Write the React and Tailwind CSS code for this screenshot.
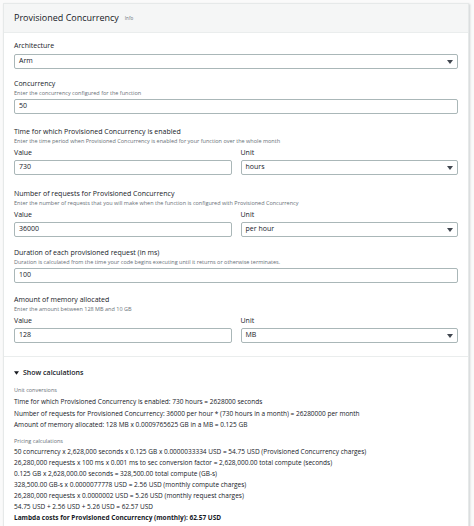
import React from 'react';

const Caret = () => (
  <svg width="6" height="4" viewBox="0 0 6 4" className="shrink-0">
    <path d="M0 0h6L3 4z" fill="#414750" />
  </svg>
);

const Label = ({ children }) => (
  <div className="text-[7px] leading-[10px] font-medium text-[#16191f]">{children}</div>
);

const Desc = ({ children }) => (
  <div className="text-[5.5px] leading-[8px] text-[#687078]">{children}</div>
);

const Input = ({ value }) => (
  <div className="h-[15px] border border-[#aab7b8] rounded-[2px] bg-white px-[4px] flex items-center text-[7px] text-[#16191f]">
    {value}
  </div>
);

const Select = ({ value }) => (
  <div className="h-[15px] border border-[#aab7b8] rounded-[2px] bg-white pl-[4px] pr-[4px] flex items-center justify-between text-[7px] text-[#16191f]">
    <span>{value}</span>
    <Caret />
  </div>
);

const Field = ({ label, desc, children, className = '' }) => (
  <div className={className}>
    <Label>{label}</Label>
    {desc && <Desc>{desc}</Desc>}
    <div className={desc ? 'mt-[2px]' : 'mt-[3px]'}>{children}</div>
  </div>
);

const SplitField = ({ label, desc, value, unit, className = '' }) => (
  <div className={className}>
    <Label>{label}</Label>
    <Desc>{desc}</Desc>
    <div className="grid grid-cols-2 gap-[9px] mt-[3px]">
      <div>
        <Label>Value</Label>
        <div className="mt-[2px]"><Input value={value} /></div>
      </div>
      <div>
        <Label>Unit</Label>
        <div className="mt-[2px]">{unit ? <Select value={unit} /> : <Input value="" />}</div>
      </div>
    </div>
  </div>
);

const conversions = [
  'Time for which Provisioned Concurrency is enabled: 730 hours = 2628000 seconds',
  'Number of requests for Provisioned Concurrency: 36000 per hour * (730 hours in a month) = 26280000 per month',
  'Amount of memory allocated: 128 MB x 0.0009765625 GB in a MB = 0.125 GB',
];

const pricing = [
  '50 concurrency x 2,628,000 seconds x 0.125 GB x 0.0000033334 USD = 54.75 USD (Provisioned Concurrency charges)',
  '26,280,000 requests x 100 ms x 0.001 ms to sec conversion factor = 2,628,000.00 total compute (seconds)',
  '0.125 GB x 2,628,000.00 seconds = 328,500.00 total compute (GB-s)',
  '328,500.00 GB-s x 0.0000077778 USD = 2.56 USD (monthly compute charges)',
  '26,280,000 requests x 0.0000002 USD = 5.26 USD (monthly request charges)',
  '54.75 USD + 2.56 USD + 5.26 USD = 62.57 USD',
];

export default function App() {
  return (
    <div className="min-h-screen bg-[#fafafa] pt-[3px] pl-[3px] pr-[5px] font-['Open_Sans',sans-serif]">
      <div className="bg-white border border-[#e6e9e9] shadow-[1px_1px_2px_0_rgba(0,28,36,0.18)]">
        <div className="h-[29px] bg-[#f5f6f6] border-b border-[#eaeded] px-[10px] flex items-center gap-[6px]">
          <span className="text-[9px] font-medium text-[#16191f]">Provisioned Concurrency</span>
          <span className="text-[4.5px] text-[#687078]">Info</span>
        </div>

        <div className="px-[10px] pt-[8px] pb-[13px] flex flex-col">
          <Field label="Architecture">
            <Select value="Arm" />
          </Field>

          <Field
            className="mt-[10px]"
            label="Concurrency"
            desc="Enter the concurrency configured for the function"
          >
            <Input value="50" />
          </Field>

          <SplitField
            className="mt-[13px]"
            label="Time for which Provisioned Concurrency is enabled"
            desc="Enter the time period when Provisioned Concurrency is enabled for your function over the whole month"
            value="730"
            unit="hours"
          />

          <SplitField
            className="mt-[14px]"
            label="Number of requests for Provisioned Concurrency"
            desc="Enter the number of requests that you will make when the function is configured with Provisioned Concurrency"
            value="36000"
            unit="per hour"
          />

          <Field
            className="mt-[11px]"
            label="Duration of each provisioned request (in ms)"
            desc="Duration is calculated from the time your code begins executing until it returns or otherwise terminates."
          >
            <Input value="100" />
          </Field>

          <SplitField
            className="mt-[12px]"
            label="Amount of memory allocated"
            desc="Enter the amount between 128 MB and 10 GB"
            value="128"
            unit="MB"
          />
        </div>

        <div className="border-t border-[#eaeded] px-[10px] pt-[11px] pb-[12px]">
          <div className="flex items-center gap-[4px] text-[7px] leading-[10px] font-semibold text-[#16191f]">
            <svg width="5" height="4" viewBox="0 0 6 4"><path d="M0 0h6L3 4z" fill="#16191f" /></svg>
            <span>Show calculations</span>
          </div>

          <div className="mt-[8px] text-[5.5px] leading-[8px] text-[#687078]">Unit conversions</div>
          <div className="mt-[2px] text-[6.5px] leading-[11.5px] text-[#16191f]">
            {conversions.map((line) => (
              <div key={line}>{line}</div>
            ))}
          </div>

          <div className="mt-[6px] text-[5.5px] leading-[8px] text-[#687078]">Pricing calculations</div>
          <div className="mt-[1px] text-[6.5px] leading-[11px] text-[#16191f]">
            {pricing.map((line) => (
              <div key={line}>{line}</div>
            ))}
            <div className="font-bold">Lambda costs for Provisioned Concurrency (monthly): 62.57 USD</div>
          </div>
        </div>
      </div>
    </div>
  );
}
